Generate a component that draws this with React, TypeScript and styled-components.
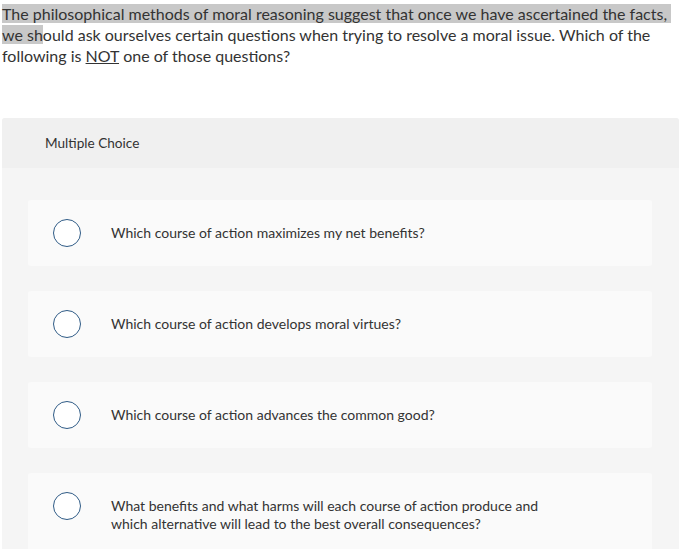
import styled, { createGlobalStyle } from "styled-components";

const GlobalStyle = createGlobalStyle`
  body {
    margin: 0;
    background: #ffffff;
    font-family: Lato, "Open Sans", sans-serif;
    color: #333333;
  }
`;

const options = [
  "Which course of action maximizes my net benefits?",
  "Which course of action develops moral virtues?",
  "Which course of action advances the common good?",
  "What benefits and what harms will each course of action produce and which alternative will lead to the best overall consequences?",
];

export default function App() {
  return (
    <Page>
      <GlobalStyle />
      <Prompt>
        <Marked>
          The philosophical methods of moral reasoning suggest that once we have ascertained the facts,&nbsp;
        </Marked>
        <br />
        <Marked>we sh</Marked>ould ask ourselves certain questions when trying to resolve a moral issue. Which of the
        <br />
        following is <u>NOT</u> one of those questions?
      </Prompt>
      <Card>
        <CardHeader>Multiple Choice</CardHeader>
        <OptionList>
          {options.map((text) => (
            <Option key={text}>
              <Radio />
              <OptionText>{text}</OptionText>
            </Option>
          ))}
        </OptionList>
      </Card>
    </Page>
  );
}

const Page = styled.div`
  width: 684px;
  height: 549px;
  overflow: hidden;
`;

const Prompt = styled.p`
  margin: 0;
  padding: 3px 0 0 2px;
  font-size: 16px;
  line-height: 21px;
  white-space: nowrap;
  color: #333333;
`;

const Marked = styled.span`
  background: #c8c8c8;
`;

const Card = styled.div`
  margin: 52px 5px 0 2px;
  background: #f5f5f5;
  border-radius: 3px 3px 0 0;
`;

const CardHeader = styled.div`
  height: 50px;
  display: flex;
  align-items: center;
  padding-left: 43px;
  background: #f0f0f0;
  border-radius: 3px 3px 0 0;
  font-size: 13.6px;
  color: #333333;
`;

const OptionList = styled.div`
  display: flex;
  flex-direction: column;
  gap: 25px;
  padding: 32px 27px 30px 26px;
`;

const Option = styled.div`
  display: flex;
  align-items: flex-start;
  background: #fafafa;
  border-radius: 3px;
  padding: 19px 20px 19px 25px;
`;

const Radio = styled.span`
  flex: none;
  box-sizing: border-box;
  width: 28px;
  height: 28px;
  border: 1.5px solid #2f5b86;
  border-radius: 50%;
  background: #ffffff;
  margin-right: 30px;
`;

const OptionText = styled.span`
  padding-top: 5px;
  font-size: 14px;
  line-height: 18px;
  max-width: 440px;
  color: #333333;
`;
